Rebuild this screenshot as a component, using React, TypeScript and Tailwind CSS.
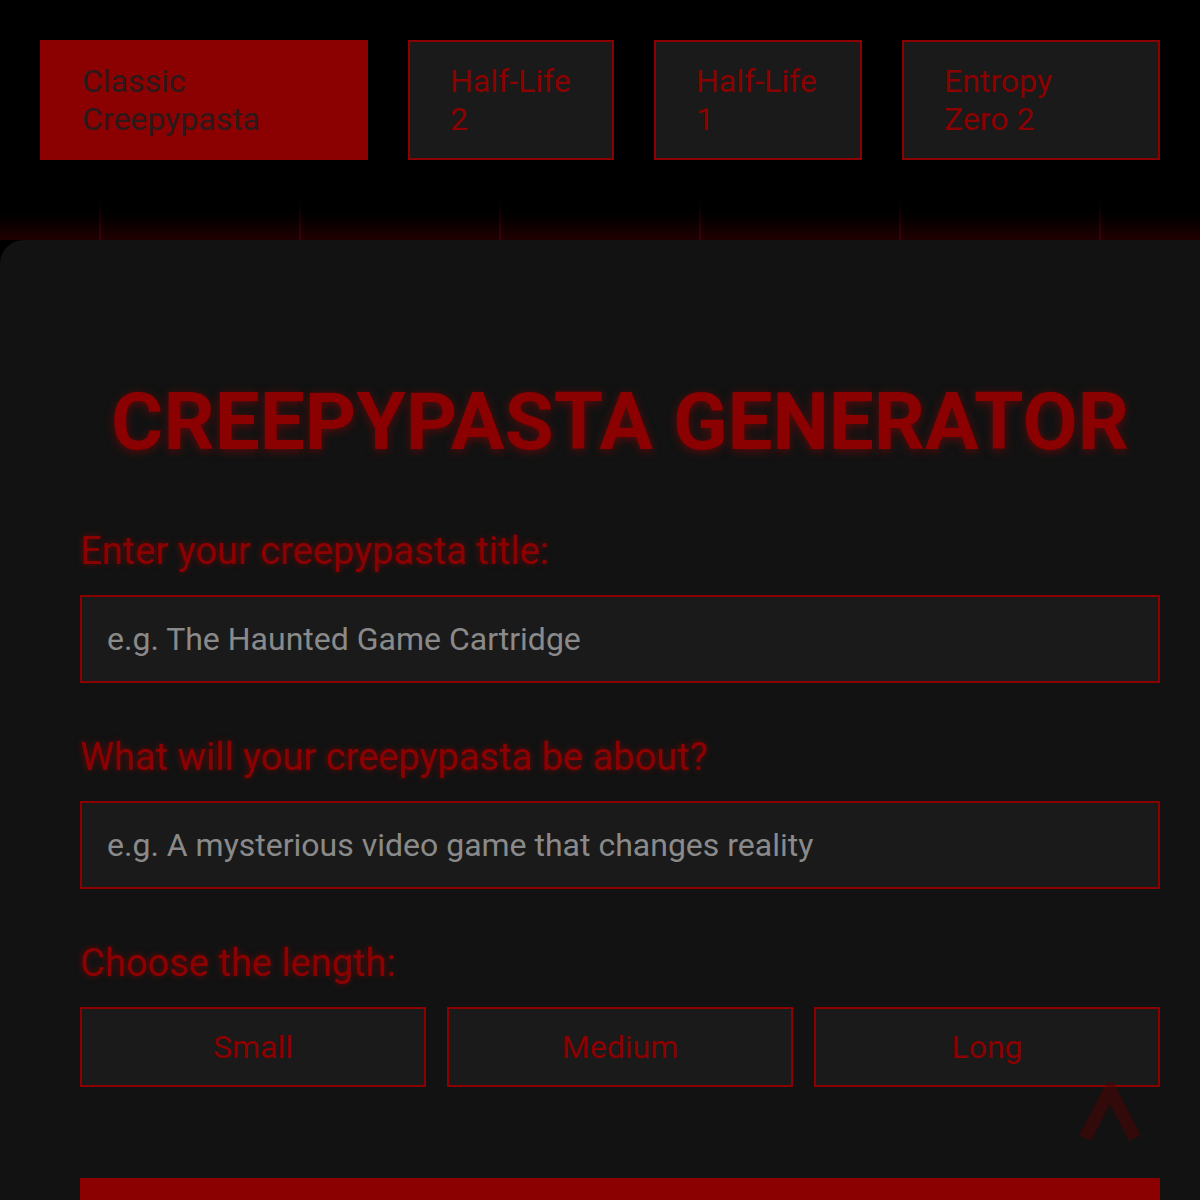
import React, { useState } from "react";

const tabs = [
  { lines: ["Classic", "Creepypasta"], width: "w-[328px]" },
  { lines: ["Half-Life", "2"], width: "w-[206px]" },
  { lines: ["Half-Life", "1"], width: "w-[208px]" },
  { lines: ["Entropy", "Zero 2"], width: "w-[258px]" },
];

const lengths = ["Small", "Medium", "Long"];

export default function App() {
  const [active, setActive] = useState(0);
  const [size, setSize] = useState<string | null>(null);

  return (
    <div className="min-h-screen bg-black font-['Roboto','Liberation_Sans',sans-serif] overflow-hidden">
      {/* tabs */}
      <nav className="flex gap-10 px-10 pt-10">
        {tabs.map((t, i) => (
          <button
            key={i}
            onClick={() => setActive(i)}
            className={`${t.width} h-[120px] flex flex-col justify-center items-start pl-[40px] text-left text-[32px] leading-[38px] border-2 border-[#8b0000] ${
              i === active ? "bg-[#8b0000] text-[#2a1a1a]" : "bg-[#1a1a1a] text-[#8b0000]"
            }`}
          >
            {t.lines.map((l) => (
              <span key={l}>{l}</span>
            ))}
          </button>
        ))}
      </nav>

      {/* glow strip */}
      <div className="relative h-20 bg-gradient-to-b from-black via-black to-[#220000]">
        <div className="absolute inset-x-0 bottom-0 h-10 flex">
          {[0, 1, 2, 3, 4, 5].map((n) => (
            <div key={n} className="flex-1 flex justify-center">
              <div className="w-[2px] h-full bg-gradient-to-b from-transparent to-[#3a0010]" />
            </div>
          ))}
        </div>
      </div>

      {/* main panel */}
      <main className="bg-[#121212] rounded-tl-[24px] pl-20 pr-10 pt-[142px] pb-20">
        <h1 className="text-center text-[80px] leading-[80px] font-bold text-[#8b0000] [text-shadow:0_2px_10px_rgba(170,0,0,0.5)]">
          CREEPYPASTA GENERATOR
        </h1>

        <label className="block mt-[65px] mb-5 text-[38px] leading-[48px] text-[#8b0000] [text-shadow:0_0_6px_rgba(170,0,0,0.6)]">
          Enter your creepypasta title:
        </label>
        <input
          className="block w-full h-[88px] px-[25px] bg-[#1a1a1a] border-2 border-[#8b0000] text-[32px] text-[#aaa] placeholder:text-[#8a8a8a] outline-none"
          placeholder="e.g. The Haunted Game Cartridge"
        />

        <label className="block mt-[50px] mb-5 text-[38px] leading-[48px] text-[#8b0000] [text-shadow:0_0_6px_rgba(170,0,0,0.6)]">
          What will your creepypasta be about?
        </label>
        <input
          className="block w-full h-[88px] px-[25px] bg-[#1a1a1a] border-2 border-[#8b0000] text-[32px] text-[#aaa] placeholder:text-[#8a8a8a] outline-none"
          placeholder="e.g. A mysterious video game that changes reality"
        />

        <label className="block mt-[50px] mb-5 text-[38px] leading-[48px] text-[#8b0000] [text-shadow:0_0_6px_rgba(170,0,0,0.6)]">
          Choose the length:
        </label>
        <div className="grid grid-cols-3 gap-[21px]">
          {lengths.map((l) => (
            <button
              key={l}
              onClick={() => setSize(l)}
              className={`h-[80px] border-2 border-[#8b0000] text-[32px] text-[#8b0000] ${
                size === l ? "bg-[#2a0a0a]" : "bg-[#1a1a1a]"
              }`}
            >
              {l}
            </button>
          ))}
        </div>

        {/* generate button: label sits below the fold */}
        <button className="block w-full mt-[91px] pt-[40px] pb-[30px] bg-[#8b0000] text-[34px] leading-[40px] text-[#1a1a1a]">
          Generate
        </button>
      </main>

      {/* back to top */}
      <button className="fixed left-[1078px] top-[1082px] w-[64px] h-[60px] opacity-60">
        <svg viewBox="0 0 64 60" className="w-full h-full">
          <polyline points="7,56 32,8 57,56" fill="none" stroke="#4a0606" strokeWidth="13" strokeLinejoin="miter" />
        </svg>
      </button>
    </div>
  );
}
